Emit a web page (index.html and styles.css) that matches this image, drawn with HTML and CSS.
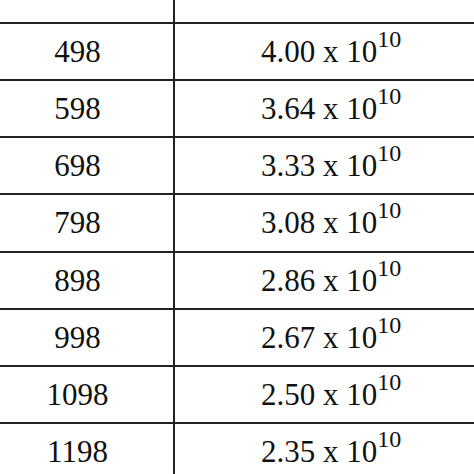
FILE: index.html
```html
<!DOCTYPE html>
<html>
<head>
<meta charset="utf-8">
<link rel="stylesheet" href="styles.css">
</head>
<body>
<div class="frame">
  <table class="data">
    <tr class="head"><td class="c1"></td><td class="c2"></td></tr>
    <tr><td class="c1">498</td><td class="c2">4.00 x 10<sup>10</sup></td></tr>
    <tr><td class="c1">598</td><td class="c2">3.64 x 10<sup>10</sup></td></tr>
    <tr><td class="c1">698</td><td class="c2">3.33 x 10<sup>10</sup></td></tr>
    <tr><td class="c1">798</td><td class="c2">3.08 x 10<sup>10</sup></td></tr>
    <tr><td class="c1">898</td><td class="c2">2.86 x 10<sup>10</sup></td></tr>
    <tr><td class="c1">998</td><td class="c2">2.67 x 10<sup>10</sup></td></tr>
    <tr><td class="c1">1098</td><td class="c2">2.50 x 10<sup>10</sup></td></tr>
    <tr class="last"><td class="c1">1198</td><td class="c2">2.35 x 10<sup>10</sup></td></tr>
  </table>
</div>
</body>
</html>
```
FILE: styles.css
```css
html, body {
  margin: 0;
  padding: 0;
  background: #fff;
}
.frame {
  width: 474px;
  height: 474px;
  overflow: hidden;
}
.data {
  border-collapse: collapse;
  margin-left: -14px;
  width: 501px;
  font-family: "Liberation Serif", "Times New Roman", serif;
  font-size: 31px;
  color: #111;
  table-layout: fixed;
}
.data td {
  padding: 0;
  text-align: center;
  vertical-align: middle;
  height: 55.14px;
  line-height: 31px;
  border-bottom: 2px solid #222;
}
.data .c1 {
  width: 183px;
  padding-right: 4px;
  border-right: 2px solid #222;
}
.data .c2 {
  width: 312px;
}
.data .head td {
  height: 22px;
}
.data .last td {
  border-bottom: none;
}
sup {
  font-size: 24px;
  line-height: 0;
  vertical-align: 0;
  position: relative;
  top: -15px;
}
```
